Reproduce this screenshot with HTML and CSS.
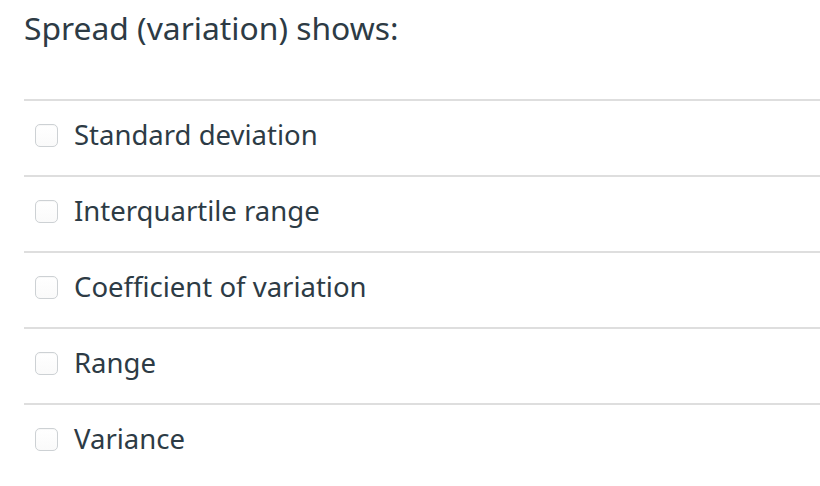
FILE: index.html
```html
<!DOCTYPE html>
<html>
<head>
<meta charset="utf-8">
<link rel="stylesheet" href="styles.css">
</head>
<body>
<div class="question">
  <h1 class="title">Spread (variation) shows:</h1>
  <ul class="answers">
    <li class="answer"><span class="box"></span><span class="label">Standard deviation</span></li>
    <li class="answer"><span class="box"></span><span class="label">Interquartile range</span></li>
    <li class="answer"><span class="box"></span><span class="label">Coefficient of variation</span></li>
    <li class="answer"><span class="box"></span><span class="label">Range</span></li>
    <li class="answer"><span class="box"></span><span class="label">Variance</span></li>
  </ul>
</div>
</body>
</html>
```
FILE: styles.css
```css
html, body {
  margin: 0;
  padding: 0;
  background: #fff;
}
body {
  font-family: "Noto Sans", "Open Sans", sans-serif;
  color: #2d3b45;
}
.question {
  padding: 0 0 0 24px;
}
.title {
  margin: 0;
  height: 99px;
  padding-top: 8px;
  box-sizing: border-box;
  font-size: 31.8px;
  font-weight: 400;
  line-height: 40px;
}
.answers {
  list-style: none;
  margin: 0;
  padding: 0;
}
.answer {
  display: flex;
  align-items: center;
  height: 76px;
  box-sizing: border-box;
  border-top: 2px solid #dedede;
  padding-bottom: 6px;
}
.box {
  width: 21px;
  height: 21px;
  margin-left: 11px;
  margin-right: 16px;
  border: 1px solid #cdd1d4;
  border-radius: 5px;
  background: linear-gradient(#fff, #fafafa);
  box-shadow: inset 0 1px 1px rgba(0,0,0,0.03);
  flex: none;
}
.label {
  font-size: 27.5px;
  line-height: 30px;
}
```
